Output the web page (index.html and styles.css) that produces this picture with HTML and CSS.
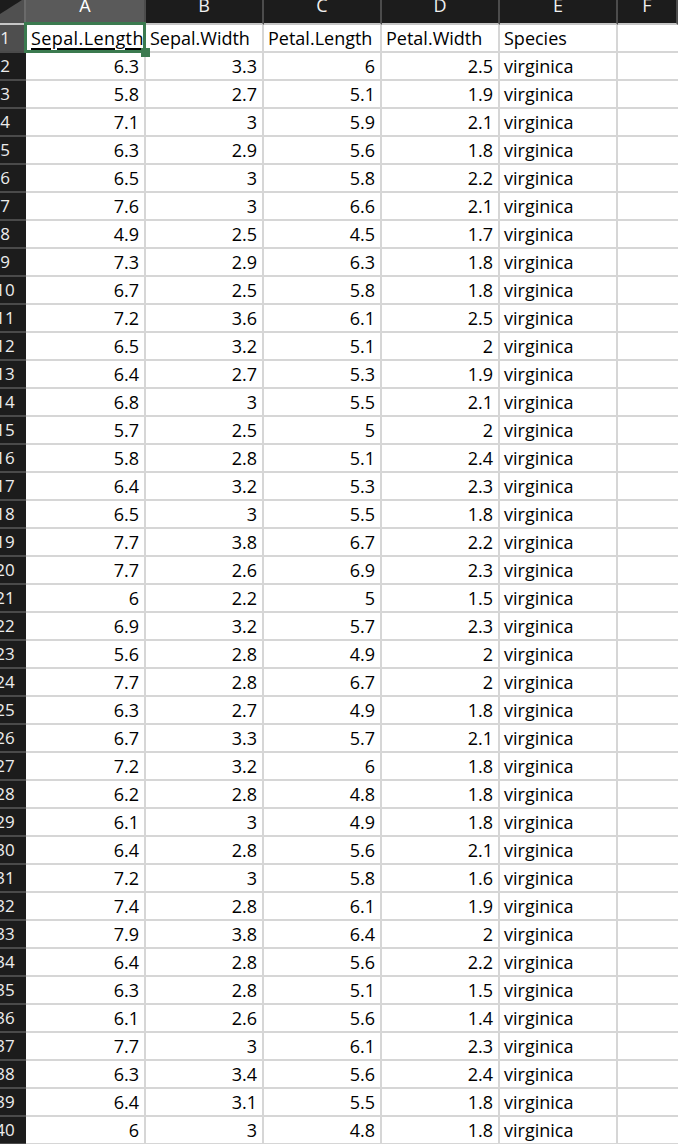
FILE: index.html
```html
<!DOCTYPE html>
<html lang="en">
<head>
<meta charset="utf-8">
<title>iris - virginica</title>
<link rel="stylesheet" href="styles.css">
</head>
<body>
<div class="sheet">
  <div class="row">
    <div class="corner"><svg class="corner-tri" width="24" height="23" viewBox="0 0 24 23"><polygon points="0,14 22,0 24,0 24,23 0,23" /></svg></div>
    <div class="ch sel">A</div><div class="ch">B</div><div class="ch">C</div><div class="ch">D</div><div class="ch">E</div><div class="ch">F</div>
  </div>
  <div class="row">
    <div class="rh sel"><span>1</span></div>
    <div class="c t u">Sepal.Length</div><div class="c t">Sepal.Width</div><div class="c t">Petal.Length</div><div class="c t">Petal.Width</div><div class="c t">Species</div><div class="c e"></div>
  </div>
  <div class="row"><div class="rh"><span>2</span></div><div class="c n">6.3</div><div class="c n">3.3</div><div class="c n">6</div><div class="c n">2.5</div><div class="c t">virginica</div><div class="c e"></div></div>
  <div class="row"><div class="rh"><span>3</span></div><div class="c n">5.8</div><div class="c n">2.7</div><div class="c n">5.1</div><div class="c n">1.9</div><div class="c t">virginica</div><div class="c e"></div></div>
  <div class="row"><div class="rh"><span>4</span></div><div class="c n">7.1</div><div class="c n">3</div><div class="c n">5.9</div><div class="c n">2.1</div><div class="c t">virginica</div><div class="c e"></div></div>
  <div class="row"><div class="rh"><span>5</span></div><div class="c n">6.3</div><div class="c n">2.9</div><div class="c n">5.6</div><div class="c n">1.8</div><div class="c t">virginica</div><div class="c e"></div></div>
  <div class="row"><div class="rh"><span>6</span></div><div class="c n">6.5</div><div class="c n">3</div><div class="c n">5.8</div><div class="c n">2.2</div><div class="c t">virginica</div><div class="c e"></div></div>
  <div class="row"><div class="rh"><span>7</span></div><div class="c n">7.6</div><div class="c n">3</div><div class="c n">6.6</div><div class="c n">2.1</div><div class="c t">virginica</div><div class="c e"></div></div>
  <div class="row"><div class="rh"><span>8</span></div><div class="c n">4.9</div><div class="c n">2.5</div><div class="c n">4.5</div><div class="c n">1.7</div><div class="c t">virginica</div><div class="c e"></div></div>
  <div class="row"><div class="rh"><span>9</span></div><div class="c n">7.3</div><div class="c n">2.9</div><div class="c n">6.3</div><div class="c n">1.8</div><div class="c t">virginica</div><div class="c e"></div></div>
  <div class="row"><div class="rh"><span>10</span></div><div class="c n">6.7</div><div class="c n">2.5</div><div class="c n">5.8</div><div class="c n">1.8</div><div class="c t">virginica</div><div class="c e"></div></div>
  <div class="row"><div class="rh"><span>11</span></div><div class="c n">7.2</div><div class="c n">3.6</div><div class="c n">6.1</div><div class="c n">2.5</div><div class="c t">virginica</div><div class="c e"></div></div>
  <div class="row"><div class="rh"><span>12</span></div><div class="c n">6.5</div><div class="c n">3.2</div><div class="c n">5.1</div><div class="c n">2</div><div class="c t">virginica</div><div class="c e"></div></div>
  <div class="row"><div class="rh"><span>13</span></div><div class="c n">6.4</div><div class="c n">2.7</div><div class="c n">5.3</div><div class="c n">1.9</div><div class="c t">virginica</div><div class="c e"></div></div>
  <div class="row"><div class="rh"><span>14</span></div><div class="c n">6.8</div><div class="c n">3</div><div class="c n">5.5</div><div class="c n">2.1</div><div class="c t">virginica</div><div class="c e"></div></div>
  <div class="row"><div class="rh"><span>15</span></div><div class="c n">5.7</div><div class="c n">2.5</div><div class="c n">5</div><div class="c n">2</div><div class="c t">virginica</div><div class="c e"></div></div>
  <div class="row"><div class="rh"><span>16</span></div><div class="c n">5.8</div><div class="c n">2.8</div><div class="c n">5.1</div><div class="c n">2.4</div><div class="c t">virginica</div><div class="c e"></div></div>
  <div class="row"><div class="rh"><span>17</span></div><div class="c n">6.4</div><div class="c n">3.2</div><div class="c n">5.3</div><div class="c n">2.3</div><div class="c t">virginica</div><div class="c e"></div></div>
  <div class="row"><div class="rh"><span>18</span></div><div class="c n">6.5</div><div class="c n">3</div><div class="c n">5.5</div><div class="c n">1.8</div><div class="c t">virginica</div><div class="c e"></div></div>
  <div class="row"><div class="rh"><span>19</span></div><div class="c n">7.7</div><div class="c n">3.8</div><div class="c n">6.7</div><div class="c n">2.2</div><div class="c t">virginica</div><div class="c e"></div></div>
  <div class="row"><div class="rh"><span>20</span></div><div class="c n">7.7</div><div class="c n">2.6</div><div class="c n">6.9</div><div class="c n">2.3</div><div class="c t">virginica</div><div class="c e"></div></div>
  <div class="row"><div class="rh"><span>21</span></div><div class="c n">6</div><div class="c n">2.2</div><div class="c n">5</div><div class="c n">1.5</div><div class="c t">virginica</div><div class="c e"></div></div>
  <div class="row"><div class="rh"><span>22</span></div><div class="c n">6.9</div><div class="c n">3.2</div><div class="c n">5.7</div><div class="c n">2.3</div><div class="c t">virginica</div><div class="c e"></div></div>
  <div class="row"><div class="rh"><span>23</span></div><div class="c n">5.6</div><div class="c n">2.8</div><div class="c n">4.9</div><div class="c n">2</div><div class="c t">virginica</div><div class="c e"></div></div>
  <div class="row"><div class="rh"><span>24</span></div><div class="c n">7.7</div><div class="c n">2.8</div><div class="c n">6.7</div><div class="c n">2</div><div class="c t">virginica</div><div class="c e"></div></div>
  <div class="row"><div class="rh"><span>25</span></div><div class="c n">6.3</div><div class="c n">2.7</div><div class="c n">4.9</div><div class="c n">1.8</div><div class="c t">virginica</div><div class="c e"></div></div>
  <div class="row"><div class="rh"><span>26</span></div><div class="c n">6.7</div><div class="c n">3.3</div><div class="c n">5.7</div><div class="c n">2.1</div><div class="c t">virginica</div><div class="c e"></div></div>
  <div class="row"><div class="rh"><span>27</span></div><div class="c n">7.2</div><div class="c n">3.2</div><div class="c n">6</div><div class="c n">1.8</div><div class="c t">virginica</div><div class="c e"></div></div>
  <div class="row"><div class="rh"><span>28</span></div><div class="c n">6.2</div><div class="c n">2.8</div><div class="c n">4.8</div><div class="c n">1.8</div><div class="c t">virginica</div><div class="c e"></div></div>
  <div class="row"><div class="rh"><span>29</span></div><div class="c n">6.1</div><div class="c n">3</div><div class="c n">4.9</div><div class="c n">1.8</div><div class="c t">virginica</div><div class="c e"></div></div>
  <div class="row"><div class="rh"><span>30</span></div><div class="c n">6.4</div><div class="c n">2.8</div><div class="c n">5.6</div><div class="c n">2.1</div><div class="c t">virginica</div><div class="c e"></div></div>
  <div class="row"><div class="rh"><span>31</span></div><div class="c n">7.2</div><div class="c n">3</div><div class="c n">5.8</div><div class="c n">1.6</div><div class="c t">virginica</div><div class="c e"></div></div>
  <div class="row"><div class="rh"><span>32</span></div><div class="c n">7.4</div><div class="c n">2.8</div><div class="c n">6.1</div><div class="c n">1.9</div><div class="c t">virginica</div><div class="c e"></div></div>
  <div class="row"><div class="rh"><span>33</span></div><div class="c n">7.9</div><div class="c n">3.8</div><div class="c n">6.4</div><div class="c n">2</div><div class="c t">virginica</div><div class="c e"></div></div>
  <div class="row"><div class="rh"><span>34</span></div><div class="c n">6.4</div><div class="c n">2.8</div><div class="c n">5.6</div><div class="c n">2.2</div><div class="c t">virginica</div><div class="c e"></div></div>
  <div class="row"><div class="rh"><span>35</span></div><div class="c n">6.3</div><div class="c n">2.8</div><div class="c n">5.1</div><div class="c n">1.5</div><div class="c t">virginica</div><div class="c e"></div></div>
  <div class="row"><div class="rh"><span>36</span></div><div class="c n">6.1</div><div class="c n">2.6</div><div class="c n">5.6</div><div class="c n">1.4</div><div class="c t">virginica</div><div class="c e"></div></div>
  <div class="row"><div class="rh"><span>37</span></div><div class="c n">7.7</div><div class="c n">3</div><div class="c n">6.1</div><div class="c n">2.3</div><div class="c t">virginica</div><div class="c e"></div></div>
  <div class="row"><div class="rh"><span>38</span></div><div class="c n">6.3</div><div class="c n">3.4</div><div class="c n">5.6</div><div class="c n">2.4</div><div class="c t">virginica</div><div class="c e"></div></div>
  <div class="row"><div class="rh"><span>39</span></div><div class="c n">6.4</div><div class="c n">3.1</div><div class="c n">5.5</div><div class="c n">1.8</div><div class="c t">virginica</div><div class="c e"></div></div>
  <div class="row"><div class="rh"><span>40</span></div><div class="c n">6</div><div class="c n">3</div><div class="c n">4.8</div><div class="c n">1.8</div><div class="c t">virginica</div><div class="c e"></div></div>
  <div class="sel-box"></div>
  <div class="fill-handle"></div>
</div>
</body>
</html>
```

FILE: styles.css
```css
html, body {
  margin: 0;
  padding: 0;
  background: #ffffff;
  overflow: hidden;
}

.sheet {
  position: relative;
  display: grid;
  grid-template-columns: 26px 120px 118px 118px 118px 118px 60px;
  grid-template-rows: 25px;
  grid-auto-rows: 28px;
  font-family: "Open Sans", "Liberation Sans", sans-serif;
  color: #000000;
}

.row {
  display: contents;
}

.corner {
  box-sizing: border-box;
  background: #1c1c1c;
  border-right: 2px solid #6a6a6a;
  border-bottom: 2px solid #c6c6c6;
  overflow: hidden;
}

.corner-tri {
  display: block;
  fill: #505050;
}

.ch {
  box-sizing: border-box;
  background: #1c1c1c;
  color: #f0f0f0;
  border-right: 2px solid #4c4c4c;
  border-bottom: 2px solid #c6c6c6;
  font-size: 18px;
  line-height: 11px;
  text-align: center;
  white-space: nowrap;
}

.ch.sel {
  background: #5a5a5a;
  color: #ffffff;
}

.rh {
  box-sizing: border-box;
  background: #1c1c1c;
  color: #ececec;
  border-bottom: 2px solid #4a4a4a;
  padding-right: 16px;
  display: flex;
  justify-content: center;
  font-size: 17px;
  line-height: 26px;
  white-space: nowrap;
}

.rh.sel {
  background: #4e4e4e;
}

.c {
  box-sizing: border-box;
  border-right: 2px solid #d6d6d6;
  border-bottom: 2px solid #d6d6d6;
  font-size: 18px;
  line-height: 26px;
  white-space: nowrap;
  overflow: hidden;
}

.c.n {
  text-align: right;
  padding-right: 5px;
}

.c.t {
  text-align: left;
  padding-left: 4px;
}

.c.u {
  padding-left: 5px;
  letter-spacing: 0.4px;
  text-decoration: underline;
  text-decoration-thickness: 2px;
  text-underline-offset: 3px;
}

.c.e {
  border-right: none;
}

.sel-box {
  position: absolute;
  left: 24px;
  top: 22px;
  width: 122px;
  height: 31px;
  box-sizing: border-box;
  border: 3px solid #3b7a4f;
}

.fill-handle {
  position: absolute;
  left: 141px;
  top: 48px;
  width: 9px;
  height: 9px;
  background: #3b7a4f;
}
```
